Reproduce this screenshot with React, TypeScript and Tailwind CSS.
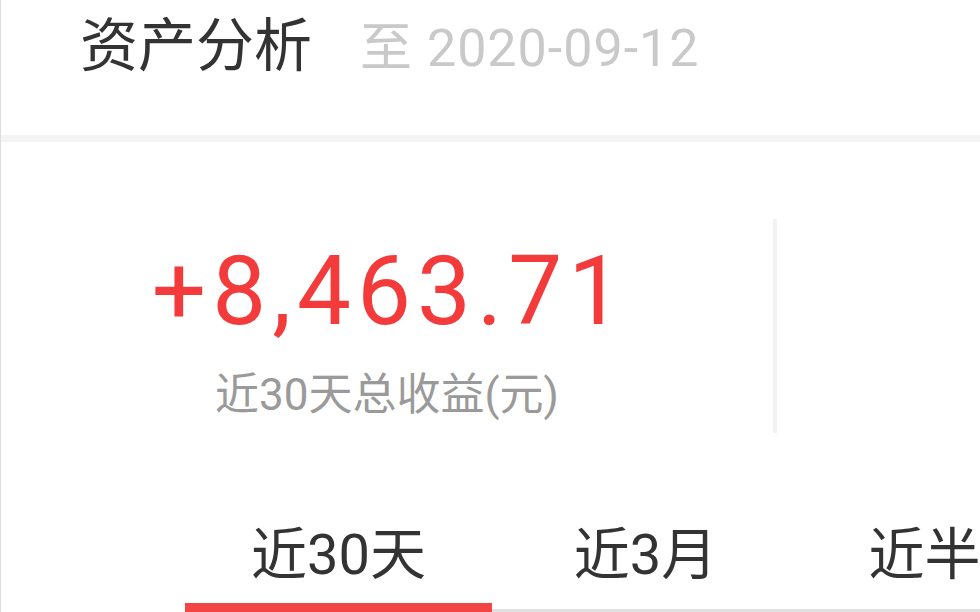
export default function App() {
  const font = { fontFamily: 'Roboto, "Noto Sans CJK SC", sans-serif' };
  return (
    <div
      className="w-[980px] h-[612px] overflow-hidden bg-white border-l border-[#dcdcdc] flex flex-col"
      style={font}
    >
      <div className="h-[135px] pl-[79px] pt-[17px] flex items-start">
        <span className="text-[58px] leading-none text-[#333333]">资产分析</span>
        <span className="ml-[48px] mt-[6px] text-[52px] leading-none text-[#c9c9c9] tracking-[1px]">
          至 2020-09-12
        </span>
      </div>
      <div className="h-[7px] bg-[#f4f4f4]" />
      <div className="flex h-[340px]">
        <div className="w-[772px] flex flex-col items-center pt-[101px]">
          <div className="text-[96px] leading-none text-[#f33b3b] tracking-[6px] pl-[6px]">+8,463.71</div>
          <div className="mt-[34px] text-[44px] leading-none text-[#9a9a9a]">近30天总收益(元)</div>
        </div>
        <div className="w-[4px] h-[214px] mt-[77px] bg-[#f2f2f2]" />
      </div>
      <div className="flex-1 flex pl-[184px]">
        <div className="flex flex-1 border-b-[3px] border-[#e0e0e0] items-end">
          <div className="w-[307px] h-full flex flex-col items-center justify-end relative">
            <span className="text-[56px] leading-none text-[#333333] mb-[26px]">近30天</span>
            <div className="absolute left-0 right-0 bottom-[-3px] h-[9px] bg-[#f44545]" />
          </div>
          <div className="w-[307px] h-full flex flex-col items-center justify-end">
            <span className="text-[56px] leading-none text-[#333333] mb-[26px]">近3月</span>
          </div>
          <div className="w-[307px] h-full flex flex-col items-center justify-end shrink-0">
            <span className="text-[56px] leading-none text-[#333333] mb-[26px]">近半年</span>
          </div>
        </div>
      </div>
    </div>
  );
}
